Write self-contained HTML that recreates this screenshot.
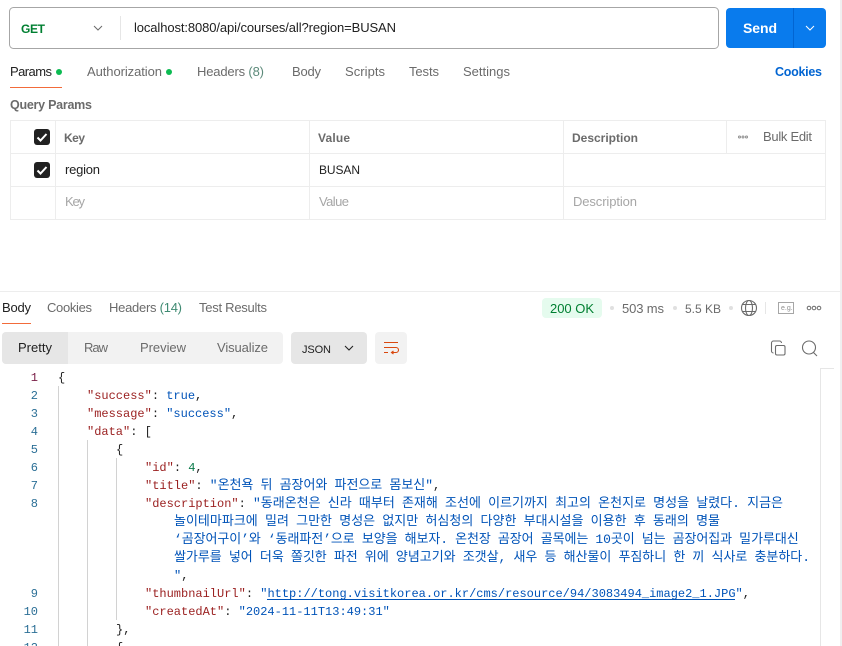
<!DOCTYPE html>
<html><head><meta charset="utf-8"><style>
html,body{margin:0;padding:0;background:#fff;width:842px;height:646px;overflow:hidden}
svg{display:block;position:absolute;left:0;top:0}
.u{font-family:"Liberation Sans",sans-serif;font-size:13px;fill:#6b6b6b}
.d{fill:#212121}.p{fill:#a6a6a6}.b{font-weight:bold}
.c{font-family:"Liberation Mono","WenQuanYi Zen Hei",monospace;font-size:12px;white-space:pre;fill:#212121}
.h{font-family:"Liberation Mono","WenQuanYi Zen Hei",monospace;font-size:13px;white-space:pre;fill:#0053b8;word-spacing:-0.6px}
.n{fill:#2b6f96;text-anchor:end}
.k{fill:#9a1f1f}.s{fill:#0053b8}.g{fill:#0a7a4a}
</style></head><body>
<svg width="842" height="646" viewBox="0 0 842 646" xmlns="http://www.w3.org/2000/svg">
<rect x="840" y="0" width="2" height="646" fill="#f0f0f0"/>
<rect x="9.5" y="7.5" width="709" height="41" rx="4" fill="#fff" stroke="#a6a6a6"/>
<text class="u b" x="21" y="33" textLength="24" style="fill:#007f31;font-size:12px">GET</text>
<path d="M94 26l4 4 4-4" fill="none" stroke="#6b6b6b"/>
<rect x="120" y="16" width="1" height="24" fill="#e6e6e6"/>
<text class="u d" x="134" y="32" textLength="262">localhost:8080/api/courses/all?region=BUSAN</text>
<rect x="726" y="8" width="100" height="40" rx="4" fill="#097bed"/>
<rect x="793" y="8" width="1" height="40" fill="#0265d2"/>
<text class="u b" x="743" y="33" textLength="34" style="fill:#fff;font-size:14px">Send</text>
<path d="M806 26l4 4 4-4" fill="none" stroke="#fff"/>

<text class="u d" x="10" y="76" textLength="42">Params</text>
<circle cx="59" cy="72" r="3" fill="#0cbb52"/>
<rect x="10" y="87" width="52" height="1" fill="#f26b3a"/>
<text class="u" x="87" y="76" textLength="75">Authorization</text>
<circle cx="169" cy="72" r="3" fill="#0cbb52"/>
<text class="u" x="197" y="76" textLength="67">Headers <tspan fill="#5c8a7a">(8)</tspan></text>
<text class="u" x="292" y="76" textLength="29">Body</text>
<text class="u" x="345" y="76" textLength="40">Scripts</text>
<text class="u" x="409" y="76" textLength="30">Tests</text>
<text class="u" x="463" y="76" textLength="47">Settings</text>
<text class="u b" x="775" y="76" textLength="47" style="fill:#0265d2;font-size:12.5px">Cookies</text>
<text class="u b" x="10" y="109" textLength="82" style="font-size:12.5px">Query Params</text>

<g fill="none" stroke="#ededed">
<path d="M10.5 120.5H825.5V219.5H10.5ZM10.5 153.5H825.5M10.5 186.5H825.5M55.500 120.5V219.5M309.5 120.5V219.5M563.5 120.5V219.5M726.5 120.5V153.5"/>
</g>
<rect x="34" y="129" width="16" height="16" rx="3" fill="#212121"/>
<path d="M37.5 137.5l3 3 6-6.5" fill="none" stroke="#fff" stroke-width="2"/>
<rect x="34" y="162" width="16" height="16" rx="3" fill="#212121"/>
<path d="M37.5 170.5l3 3 6-6.5" fill="none" stroke="#fff" stroke-width="2"/>
<text class="u b" x="64" y="142" textLength="21" style="font-size:12px">Key</text>
<text class="u b" x="318" y="142" textLength="32" style="font-size:12px">Value</text>
<text class="u b" x="572" y="142" textLength="66" style="font-size:12px">Description</text>
<g fill="none" stroke="#8f8f8f"><circle cx="739.500" cy="137" r="1"/><circle cx="743" cy="137" r="1"/><circle cx="746.500" cy="137" r="1"/></g>
<text class="u" x="763" y="141" textLength="49">Bulk Edit</text>
<text class="u d" x="65" y="174" textLength="35">region</text>
<text class="u d" x="319" y="174" textLength="41" style="font-size:12px">BUSAN</text>
<text class="u p" x="65" y="206" textLength="20">Key</text>
<text class="u p" x="319" y="206" textLength="30">Value</text>
<text class="u p" x="573" y="206" textLength="64">Description</text>

<rect x="0" y="291" width="840" height="1" fill="#ededed"/>
<text class="u d" x="2" y="312" textLength="29">Body</text>
<rect x="2" y="323" width="29" height="1" fill="#f26b3a"/>
<text class="u" x="47" y="312" textLength="45">Cookies</text>
<text class="u" x="109" y="312" textLength="73">Headers <tspan fill="#3f8a72">(14)</tspan></text>
<text class="u" x="199" y="312" textLength="68">Test Results</text>
<rect x="542" y="298" width="60" height="20" rx="4" fill="#e5fbee"/>
<text class="u" x="550" y="313" textLength="44" style="fill:#007f31">200 OK</text>
<circle cx="612" cy="308" r="2" fill="#e0e0e0"/>
<text class="u" x="622" y="313" textLength="42">503 ms</text>
<circle cx="675" cy="308" r="2" fill="#e0e0e0"/>
<text class="u" x="685" y="313" textLength="36" style="font-size:12px">5.5 KB</text>
<circle cx="731" cy="308" r="2" fill="#e0e0e0"/>
<g fill="none" stroke="#6b6b6b" stroke-width="1.1"><circle cx="749" cy="308" r="7.5"/><ellipse cx="749" cy="308" rx="3.5" ry="7.5"/><path d="M742.5 304.5h13M742.5 311.5h13"/></g>
<rect x="765" y="302" width="1" height="12" fill="#e6e6e6"/>
<rect x="778.500" y="302.500" width="15" height="11" fill="#fff" stroke="#a6a6a6"/>
<text x="781" y="310" style="font:7px 'Liberation Sans',sans-serif;fill:#8f8f8f">e.g.</text>
<g fill="none" stroke="#6b6b6b"><circle cx="809" cy="308" r="1.8"/><circle cx="814" cy="308" r="1.8"/><circle cx="819" cy="308" r="1.8"/></g>

<rect x="2" y="332" width="281" height="32" rx="4" fill="#f2f2f2"/>
<path d="M6 332H68V364H6a4 4 0 0 1-4-4V336a4 4 0 0 1 4-4Z" fill="#e6e6e6"/>
<text class="u d" x="18" y="352" textLength="34">Pretty</text>
<text class="u" x="84" y="352" textLength="24">Raw</text>
<text class="u" x="140" y="352" textLength="46">Preview</text>
<text class="u" x="217" y="352" textLength="51">Visualize</text>
<rect x="291" y="332" width="76" height="32" rx="4" fill="#e6e6e6"/>
<text class="u d" x="302" y="353" textLength="29" style="font-size:11px">JSON</text>
<path d="M345 346l4 4 4-4" fill="none" stroke="#212121" stroke-width="1.1"/>
<rect x="375" y="332" width="32" height="32" rx="4" fill="#f2f2f2"/>
<path d="M384 342.500h14M384 347.500h12a2.500 2.500 0 0 1 0 5h-4M384 352.500h4M393.500 351l-2 1.500 2 1.500" fill="none" stroke="#d9480f" stroke-width="1.1"/>
<g fill="none" stroke="#6b6b6b" stroke-width="1.1"><rect x="775.500" y="345.500" width="9.500" height="9.500" rx="1.500"/><path d="M773.500 353a2 2 0 0 1-2-2v-8a2 2 0 0 1 2-2h6a2 2 0 0 1 2 2"/><circle cx="809" cy="347.500" r="6.500"/><path d="M813.500 352.500l3.500 3.500"/></g>

<path d="M820.500 646V368.500H834" fill="none" stroke="#e6e6e6"/>
<g fill="#d2d2d2"><rect x="58" y="386" width="1" height="260"/><rect x="87" y="440" width="1" height="206"/><rect x="116" y="458" width="1" height="162"/></g>

<text class="c n" x="38" y="381" style="fill:#7a2048">1</text>
<text class="c n" x="38" y="399">2</text>
<text class="c n" x="38" y="417">3</text>
<text class="c n" x="38" y="435">4</text>
<text class="c n" x="38" y="453">5</text>
<text class="c n" x="38" y="471">6</text>
<text class="c n" x="38" y="489">7</text>
<text class="c n" x="38" y="507">8</text>
<text class="c n" x="38" y="597">9</text>
<text class="c n" x="38" y="615">10</text>
<text class="c n" x="38" y="633">11</text>
<text class="c n" x="38" y="651">12</text>

<text class="c" x="58" y="381">{</text>
<text class="c" x="87" y="399"><tspan class="k">"success"</tspan>: <tspan class="s">true</tspan>,</text>
<text class="c" x="87" y="417"><tspan class="k">"message"</tspan>: <tspan class="s">"success"</tspan>,</text>
<text class="c" x="87" y="435"><tspan class="k">"data"</tspan>: [</text>
<text class="c" x="116" y="453">{</text>
<text class="c" x="145" y="471"><tspan class="k">"id"</tspan>: <tspan class="g">4</tspan>,</text>
<text class="c" x="145" y="489"><tspan class="k">"title"</tspan>: </text>
<text class="h" x="209.800" y="489" textLength="223.200">"온천욕 뒤 곰장어와 파전으로 몸보신"</text>
<text class="c" x="433" y="489">,</text>
<text class="c" x="145" y="507"><tspan class="k">"description"</tspan>: </text>
<text class="h" x="253" y="507" textLength="530">"동래온천은 신라 때부터 존재해 조선에 이르기까지 최고의 온천지로 명성을 날렸다. 지금은</text>
<text class="h" x="174" y="525" textLength="546">놀이테마파크에 밀려 그만한 명성은 없지만 허심청의 다양한 부대시설을 이용한 후 동래의 명물</text>
<text class="h" x="174" y="543" textLength="624.700">‘곰장어구이’와 ‘동래파전’으로 보양을 해보자. 온천장 곰장어 골목에는 10곳이 넘는 곰장어집과 밀가루대신</text>
<text class="h" x="174" y="561" textLength="636">쌀가루를 넣어 더욱 쫄깃한 파전 위에 양념고기와 조갯살, 새우 등 해산물이 푸짐하니 한 끼 식사로 충분하다.</text>
<text class="c" x="174" y="579"><tspan class="s">"</tspan>,</text>
<text class="c" x="145" y="597"><tspan class="k">"thumbnailUrl"</tspan>: <tspan class="s">"</tspan><tspan class="s">http://tong.visitkorea.or.kr/cms/resource/94/3083494_image2_1.JPG</tspan><tspan class="s">"</tspan>,</text>
<text class="c" x="145" y="615"><tspan class="k">"createdAt"</tspan>: <tspan class="s">"2024-11-11T13:49:31"</tspan></text>
<text class="c" x="116" y="633">},</text>
<text class="c" x="116" y="651">{</text>
<rect x="267" y="599" width="468" height="1" fill="#0053b8"/>
</svg>
</body></html>
